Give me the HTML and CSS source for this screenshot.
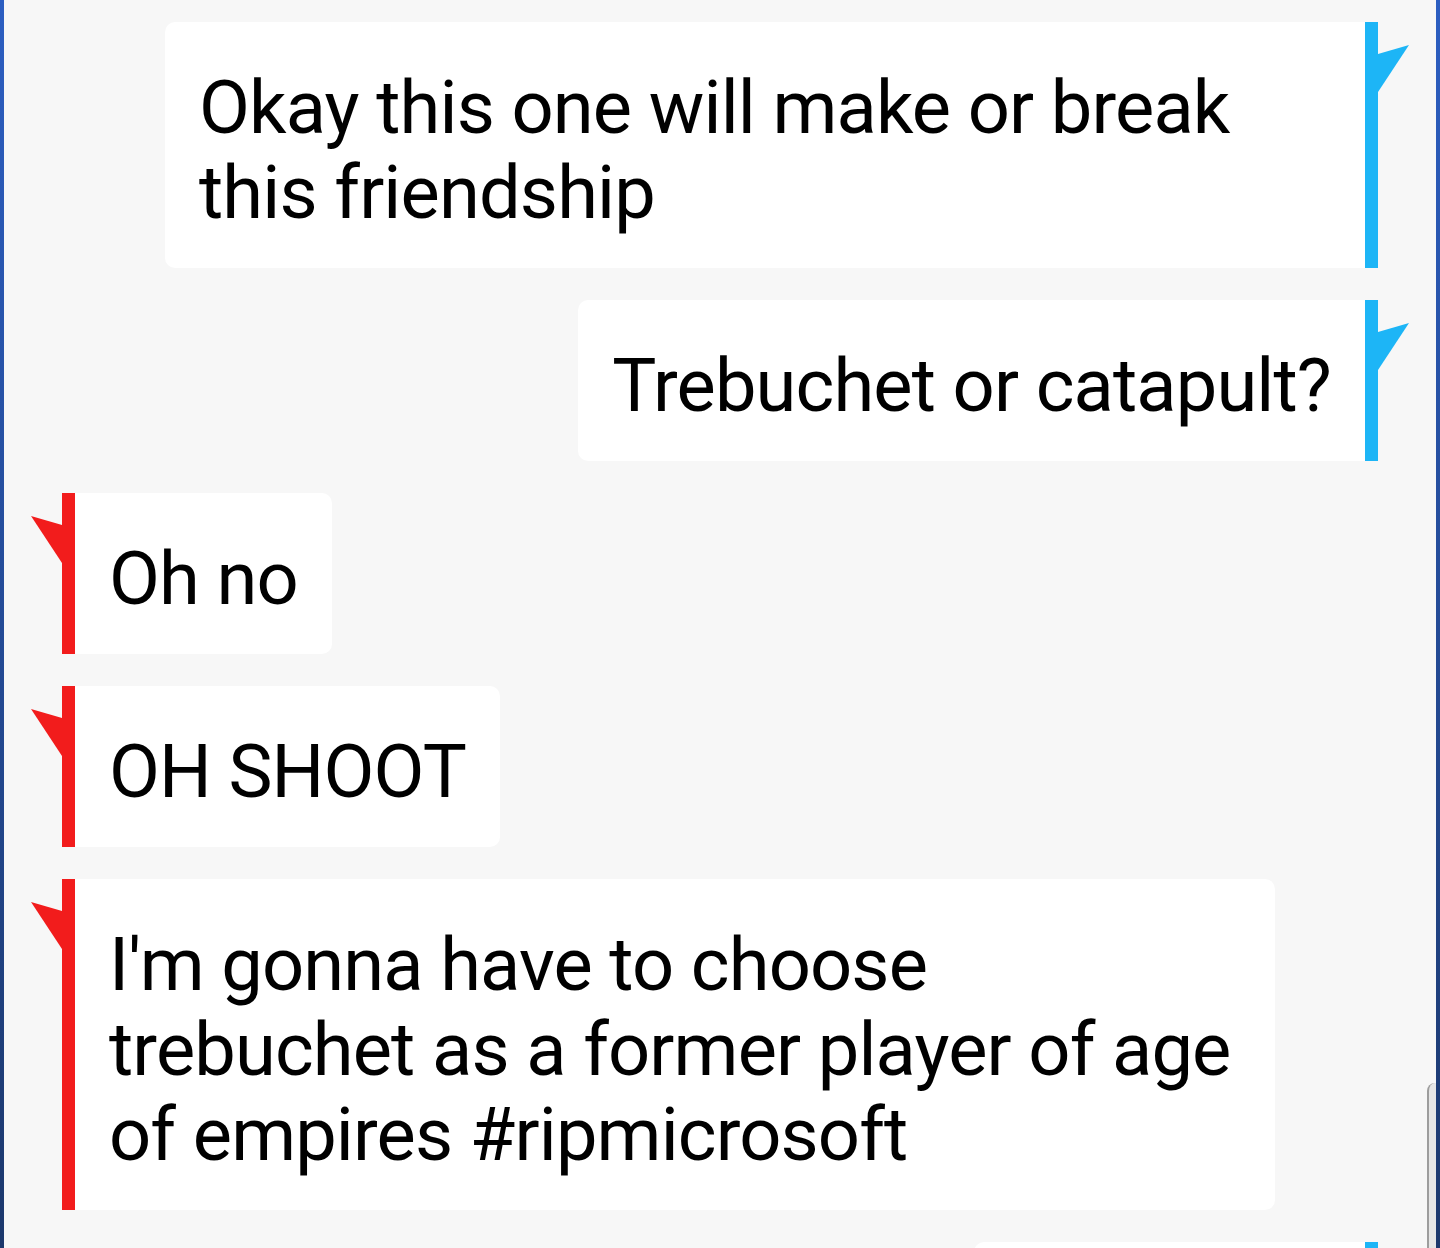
FILE: index.html
```html
<!DOCTYPE html>
<html lang="en">
<head>
    <meta charset="UTF-8">
    <meta name="viewport" content="width=device-width, initial-scale=1.0">
    <title>Chat</title>
    <link rel="stylesheet" href="styles.css">
</head>
<body>
    <div class="chat">
        <!-- Conversa -->
        <div class="msg out">
            <div class="bubble">Okay this one will make or break this friendship</div>
        </div>
        <div class="msg out">
            <div class="bubble">Trebuchet or catapult?</div>
        </div>
        <div class="msg in">
            <div class="bubble">Oh no</div>
        </div>
        <div class="msg in">
            <div class="bubble">OH SHOOT</div>
        </div>
        <div class="msg in">
            <div class="bubble">I'm gonna have to choose trebuchet as a former player of age of empires #ripmicrosoft</div>
        </div>
        <div class="msg out">
            <div class="bubble">Trebuchet</div>
        </div>

        <div class="scrollbar"></div>
    </div>
</body>
</html>
```

FILE: styles.css
```css
html, body {
    margin: 0;
    height: 100%;
    overflow: hidden;
}
html {
    background: linear-gradient(to bottom, #2c5ec1, #1c386c);
}
body {
    padding: 0 4px;
}
.chat {
    position: relative;
    height: 100%;
    background-color: #f7f7f7;
    padding-top: 22px;
    box-sizing: border-box;
    display: flex;
    flex-direction: column;
    gap: 32px;
    font-family: Roboto, "Noto Sans", Arial, sans-serif;
}
.msg {
    display: flex;
}
.msg.out {
    justify-content: flex-end;
    padding-right: 58px;
}
.msg.in {
    justify-content: flex-start;
    padding-left: 58px;
}
.bubble {
    position: relative;
    max-width: 1132px;
    padding: 43px 34px 33px;
    background-color: #fff;
    color: #000;
    font-size: 74px;
    line-height: 85px;
    letter-spacing: -0.85px;
}
.out .bubble {
    border-right: 13px solid #1db5f6;
    border-radius: 10px 0 0 10px;
}
.in .bubble {
    border-left: 13px solid #f21c1c;
    border-radius: 0 10px 10px 0;
}
.bubble::after {
    content: "";
    position: absolute;
    top: 23px;
    width: 31px;
    height: 47px;
}
.out .bubble::after {
    right: -44px;
    background-color: #1db5f6;
    clip-path: polygon(0 9px, 100% 0, 0 100%);
}
.in .bubble::after {
    left: -44px;
    background-color: #f21c1c;
    clip-path: polygon(100% 9px, 0 0, 100% 100%);
}
.scrollbar {
    position: absolute;
    top: 1083px;
    right: 0;
    bottom: 0;
    width: 7px;
    border-left: 2px solid #9d9d9d;
    border-top-left-radius: 8px;
    background-color: #e6e6e6;
}
```
